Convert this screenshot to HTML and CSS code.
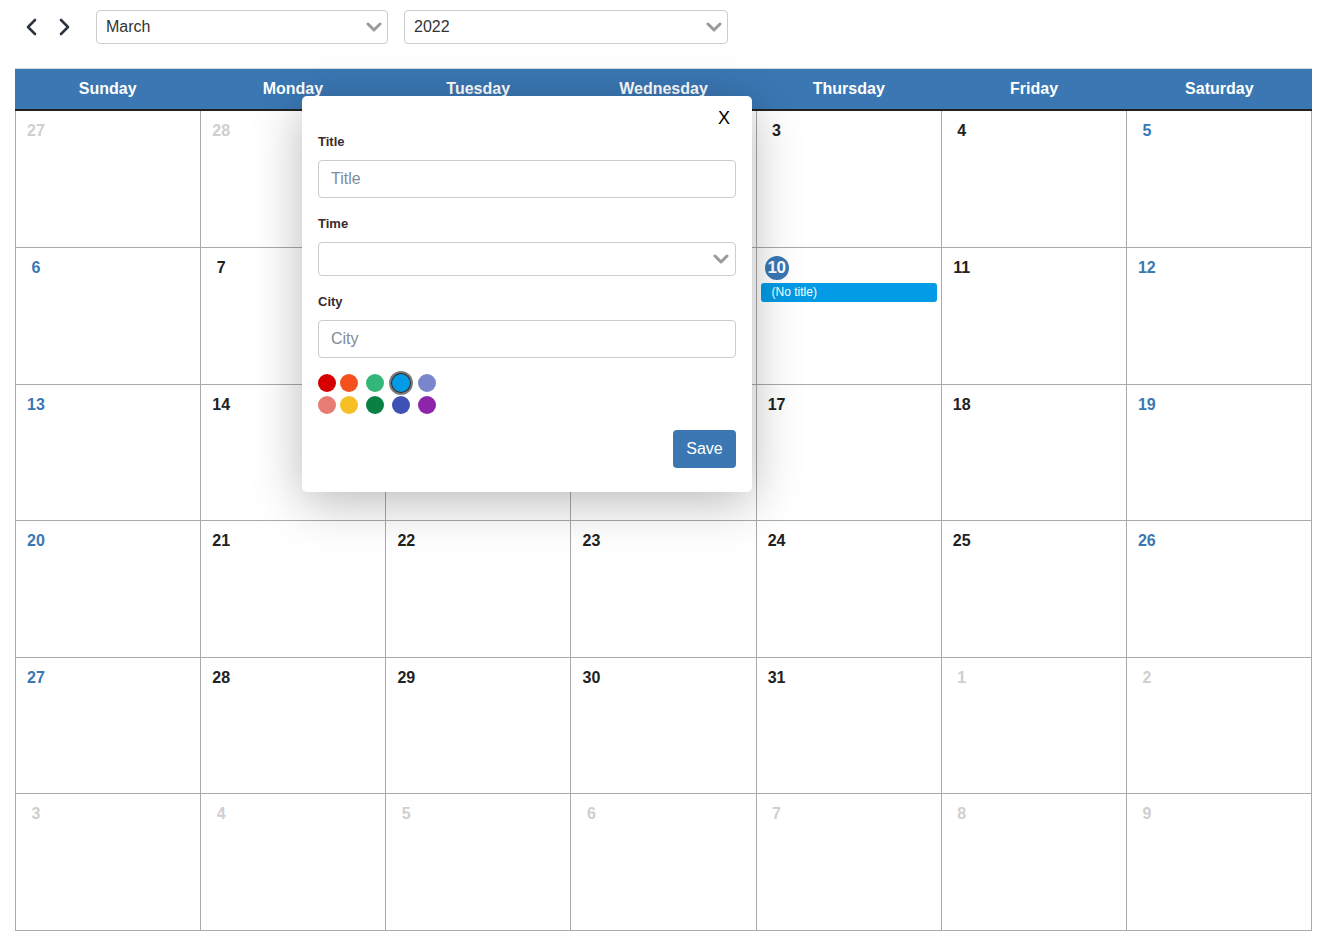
FILE: index.html
```html
<!DOCTYPE html>
<html>
<head>
<meta charset="utf-8">
<link rel="stylesheet" href="styles.css">
</head>
<body>
<div class="page">
  <div class="toolbar">
    <button class="nav-btn" aria-label="Previous">
      <svg width="14" height="18" viewBox="0 0 14 18"><polyline points="10,2 3,9 10,16" fill="none" stroke="#2b3440" stroke-width="2.6" stroke-linecap="round" stroke-linejoin="round"/></svg>
    </button>
    <button class="nav-btn" aria-label="Next">
      <svg width="14" height="18" viewBox="0 0 14 18"><polyline points="4,2 11,9 4,16" fill="none" stroke="#2b3440" stroke-width="2.6" stroke-linecap="round" stroke-linejoin="round"/></svg>
    </button>
    <div class="select month-select">
      <span>March</span>
      <svg class="chev" width="16" height="10" viewBox="0 0 16 10"><polyline points="2,2 8,8 14,2" fill="none" stroke="#9a9a9a" stroke-width="3" stroke-linecap="round" stroke-linejoin="round"/></svg>
    </div>
    <div class="select year-select">
      <span>2022</span>
      <svg class="chev" width="16" height="10" viewBox="0 0 16 10"><polyline points="2,2 8,8 14,2" fill="none" stroke="#9a9a9a" stroke-width="3" stroke-linecap="round" stroke-linejoin="round"/></svg>
    </div>
  </div>

  <div class="calendar">
    <div class="head">
      <div>Sunday</div><div>Monday</div><div>Tuesday</div><div>Wednesday</div><div>Thursday</div><div>Friday</div><div>Saturday</div>
    </div>
    <div class="grid">
      <div class="cell"><div class="num other">27</div></div>
      <div class="cell"><div class="num other">28</div></div>
      <div class="cell"><div class="num">1</div></div>
      <div class="cell"><div class="num">2</div></div>
      <div class="cell"><div class="num">3</div></div>
      <div class="cell"><div class="num">4</div></div>
      <div class="cell"><div class="num weekend">5</div></div>

      <div class="cell"><div class="num weekend">6</div></div>
      <div class="cell"><div class="num">7</div></div>
      <div class="cell"><div class="num">8</div></div>
      <div class="cell"><div class="num">9</div></div>
      <div class="cell"><div class="num today">10</div><div class="event">(No title)</div></div>
      <div class="cell"><div class="num">11</div></div>
      <div class="cell"><div class="num weekend">12</div></div>

      <div class="cell"><div class="num weekend">13</div></div>
      <div class="cell"><div class="num">14</div></div>
      <div class="cell"><div class="num">15</div></div>
      <div class="cell"><div class="num">16</div></div>
      <div class="cell"><div class="num">17</div></div>
      <div class="cell"><div class="num">18</div></div>
      <div class="cell"><div class="num weekend">19</div></div>

      <div class="cell"><div class="num weekend">20</div></div>
      <div class="cell"><div class="num">21</div></div>
      <div class="cell"><div class="num">22</div></div>
      <div class="cell"><div class="num">23</div></div>
      <div class="cell"><div class="num">24</div></div>
      <div class="cell"><div class="num">25</div></div>
      <div class="cell"><div class="num weekend">26</div></div>

      <div class="cell"><div class="num weekend">27</div></div>
      <div class="cell"><div class="num">28</div></div>
      <div class="cell"><div class="num">29</div></div>
      <div class="cell"><div class="num">30</div></div>
      <div class="cell"><div class="num">31</div></div>
      <div class="cell"><div class="num other">1</div></div>
      <div class="cell"><div class="num other">2</div></div>

      <div class="cell"><div class="num other">3</div></div>
      <div class="cell"><div class="num other">4</div></div>
      <div class="cell"><div class="num other">5</div></div>
      <div class="cell"><div class="num other">6</div></div>
      <div class="cell"><div class="num other">7</div></div>
      <div class="cell"><div class="num other">8</div></div>
      <div class="cell"><div class="num other">9</div></div>
    </div>
  </div>

  <div class="modal">
    <div class="close-row"><span class="close">X</span></div>
    <div class="group">
      <label class="label">Title</label>
      <div class="input"><span class="ph">Title</span></div>
    </div>
    <div class="group">
      <label class="label">Time</label>
      <div class="input time">
        <svg class="chev" width="16" height="10" viewBox="0 0 16 10"><polyline points="2,2 8,8 14,2" fill="none" stroke="#9a9a9a" stroke-width="3" stroke-linecap="round" stroke-linejoin="round"/></svg>
      </div>
    </div>
    <div class="group">
      <label class="label">City</label>
      <div class="input"><span class="ph">City</span></div>
    </div>
    <div class="colors">
      <div class="color-row">
        <span class="dot c1"></span><span class="dot c2"></span><span class="dot c3"></span><span class="dot c4 selected"></span><span class="dot c5"></span>
      </div>
      <div class="color-row">
        <span class="dot c6"></span><span class="dot c7"></span><span class="dot c8"></span><span class="dot c9"></span><span class="dot c10"></span>
      </div>
    </div>
    <div class="actions"><button class="save">Save</button></div>
  </div>
</div>
</body>
</html>
```

FILE: styles.css
```css
* { box-sizing: border-box; }
html, body { margin: 0; padding: 0; background: #fff; }
body {
  font-family: "Liberation Sans", Arial, sans-serif;
  color: #333;
}
.page {
  position: relative;
  width: 1326px;
  padding: 10px 14px 0 15px;
}

.toolbar {
  display: flex;
  align-items: center;
  height: 34px;
}
.nav-btn {
  background: none;
  border: 0;
  padding: 0;
  width: 14px;
  height: 18px;
  display: flex;
  margin-left: 10px;
  cursor: pointer;
}
.nav-btn + .nav-btn { margin-left: 18px; }
.select {
  height: 34px;
  border: 1px solid #ccc;
  border-radius: 4px;
  display: flex;
  align-items: center;
  justify-content: space-between;
  padding: 0 5px 0 9px;
  font-size: 16px;
  color: #333;
  background: #fff;
}
.month-select { width: 292px; margin-left: 25px; }
.year-select { width: 324px; margin-left: 16px; }
.chev { display: block; }

.calendar {
  margin-top: 24px;
  width: 1297px;
}
.head {
  display: grid;
  grid-template-columns: repeat(7, 1fr);
  height: 43px;
  background: #3a77b3;
  border-top: 1px solid #dcdcdc;
  border-bottom: 2px solid #222;
}
.head div {
  color: #fff;
  font-weight: bold;
  font-size: 16px;
  text-align: center;
  line-height: 39px;
}
.grid {
  display: grid;
  grid-template-columns: repeat(7, 1fr);
  grid-template-rows: 137px repeat(5, 136.6px);
  border-left: 1px solid #a9a9a9;
}
.cell {
  border-right: 1px solid #a9a9a9;
  border-bottom: 1px solid #a9a9a9;
  padding: 8px 4px 7px;
}
.num {
  width: 24px;
  height: 24px;
  margin-left: 4px;
  line-height: 24px;
  text-align: center;
  font-size: 16px;
  font-weight: bold;
  color: #222;
}
.num.weekend { color: #3a77b3; }
.num.other { color: #cfcfcf; }
.num.today {
  background: #3a77b3;
  color: #fff;
  border-radius: 50%;
  font-size: 17px;
  letter-spacing: -0.5px;
}
.event {
  margin-top: 3px;
  height: 19px;
  background: #039be5;
  color: #fff;
  font-size: 12px;
  line-height: 19px;
  padding-left: 11px;
  border-radius: 3px;
}

.modal {
  position: absolute;
  left: 302px;
  top: 96px;
  width: 450px;
  height: 396px;
  background: #fff;
  border-radius: 5px;
  box-shadow: 0 10px 50px rgba(0, 0, 0, 0.28);
  padding: 12px 16px 23px;
}
.close-row {
  display: flex;
  justify-content: flex-end;
  height: 20px;
  line-height: 20px;
  padding-right: 6px;
}
.close {
  font-size: 18px;
  color: #000;
}
.group { margin-top: 5px; }
.group + .group { margin-top: 17px; }
.label {
  display: block;
  font-size: 13px;
  font-weight: bold;
  color: #3a2a2e;
  line-height: 18px;
  margin-bottom: 9px;
}
.input {
  height: 38px;
  border: 1px solid #ccc;
  border-radius: 4px;
  padding: 0 12px;
  display: flex;
  align-items: center;
  font-size: 16px;
}
.input.time {
  height: 34px;
  justify-content: flex-end;
  padding-right: 6px;
}
.ph { color: #7f8a96; }

.colors {
  margin-top: 16px;
  display: flex;
  flex-direction: column;
  gap: 4px;
}
.color-row { display: flex; height: 18px; }
.dot {
  width: 18px;
  height: 18px;
  border-radius: 50%;
  margin-left: 8px;
  display: block;
}
.dot:first-child { margin-left: 0; }
.dot:nth-child(2) { margin-left: 4px; }
.dot.selected {
  box-shadow: 0 0 0 1px #2a2a2a, 0 0 0 3px #7d7d7d;
}
.c1 { background: #d50000; }
.c2 { background: #f4511e; }
.c3 { background: #33b679; }
.c4 { background: #039be5; }
.c5 { background: #7986cb; }
.c6 { background: #e67c73; }
.c7 { background: #f6bf26; }
.c8 { background: #0b8043; }
.c9 { background: #3f51b5; }
.c10 { background: #8e24aa; }

.actions {
  display: flex;
  justify-content: flex-end;
  margin-top: 16px;
}
.save {
  height: 38px;
  width: 63px;
  background: #3a77b3;
  color: #fff;
  border: 0;
  border-radius: 4px;
  font-family: "Liberation Sans", Arial, sans-serif;
  font-size: 16px;
  padding: 0;
}
```
